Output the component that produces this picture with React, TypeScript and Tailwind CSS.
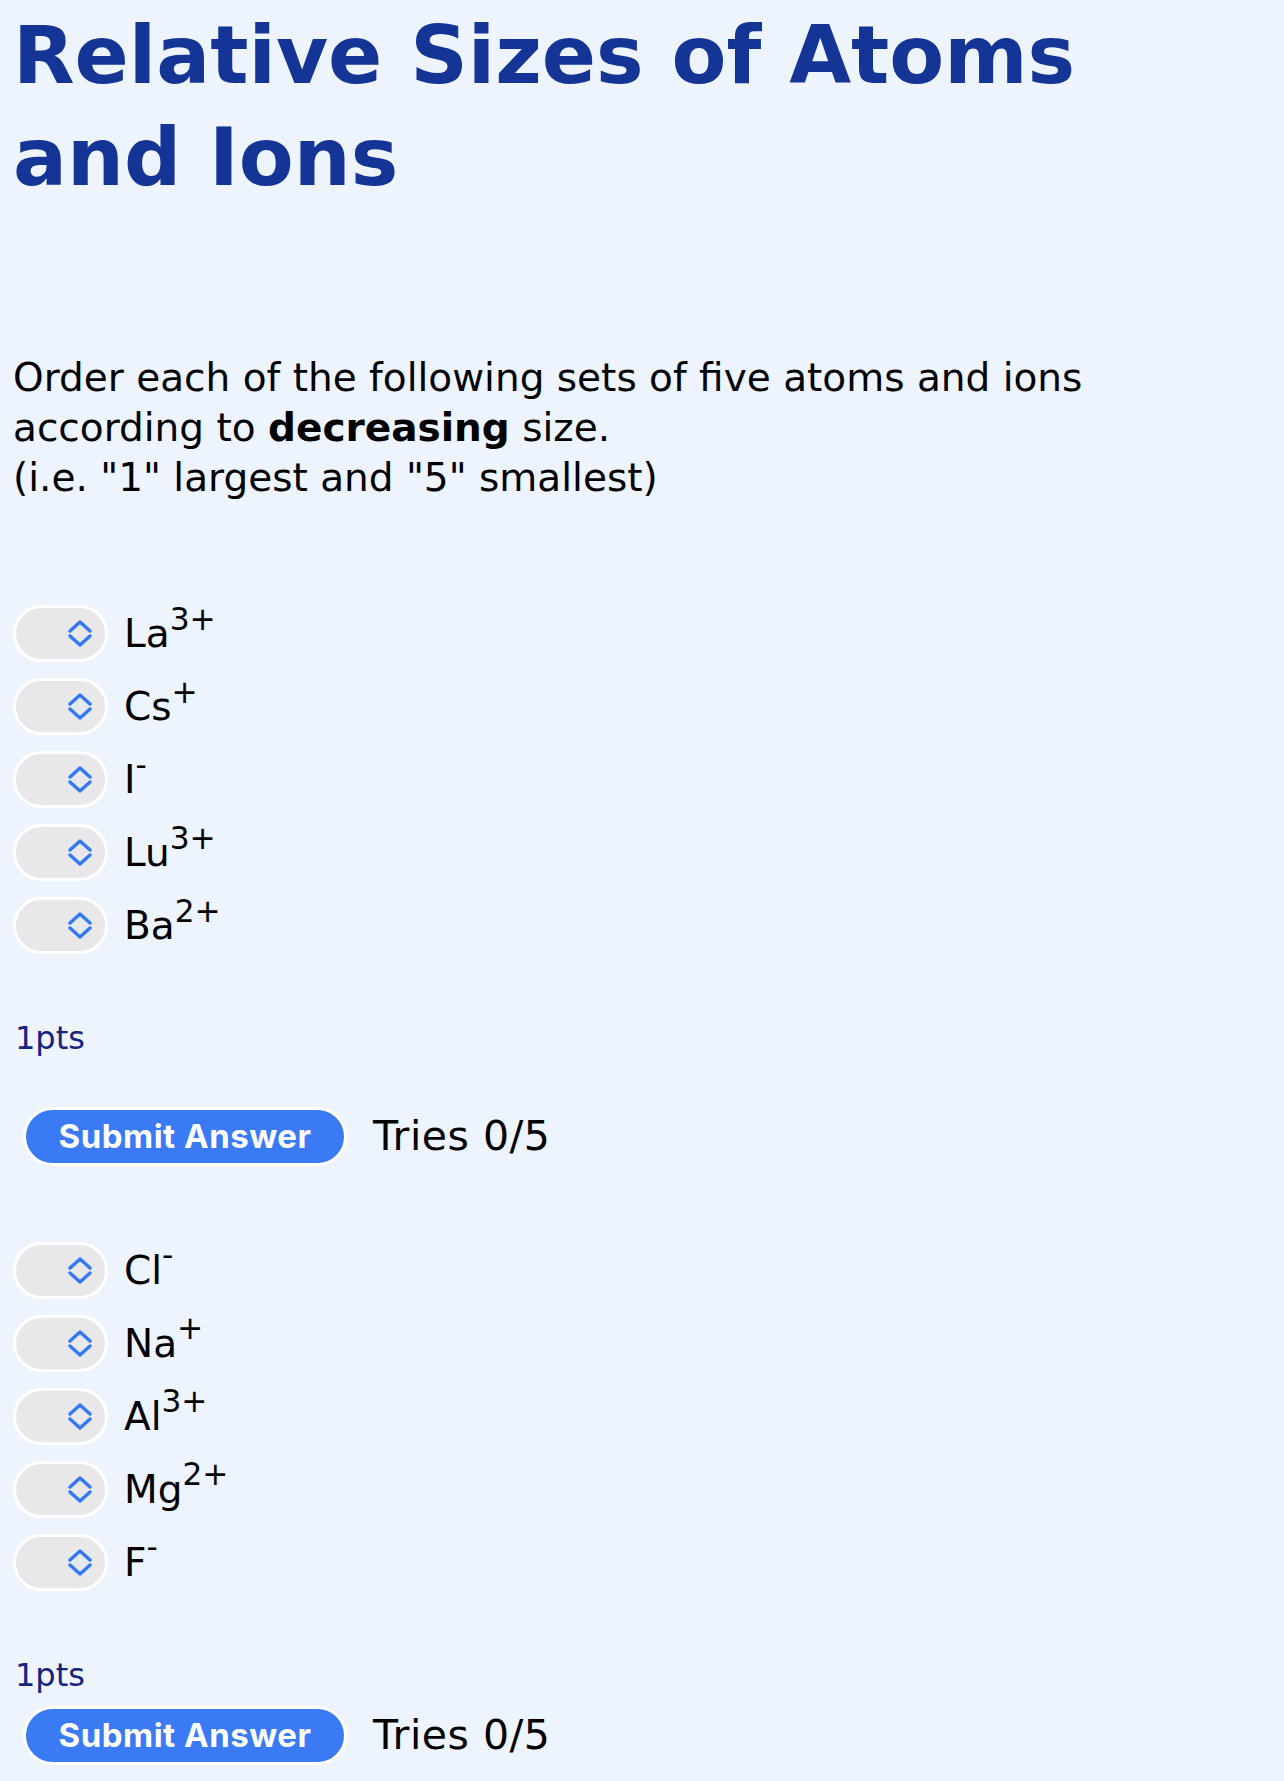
import React from "react";

type Ion = { base: string; charge: string };

const setOne: Ion[] = [
  { base: "La", charge: "3+" },
  { base: "Cs", charge: "+" },
  { base: "I", charge: "-" },
  { base: "Lu", charge: "3+" },
  { base: "Ba", charge: "2+" },
];

const setTwo: Ion[] = [
  { base: "Cl", charge: "-" },
  { base: "Na", charge: "+" },
  { base: "Al", charge: "3+" },
  { base: "Mg", charge: "2+" },
  { base: "F", charge: "-" },
];

const UpDown = () => (
  <svg className="shrink-0" width="24" height="27" viewBox="0 0 24 27" fill="none">
    <path
      d="M2 11 L12 2 L22 11 M2 16 L12 25 L22 16"
      stroke="#3478f6"
      strokeWidth="3.4"
      strokeLinecap="round"
      strokeLinejoin="round"
    />
  </svg>
);

const IonRow = ({ ion }: { ion: Ion }) => (
  <div className="flex h-[57px] items-center gap-4">
    <div className="flex h-[57px] w-[95px] items-center justify-end rounded-full border-[3px] border-white bg-[#e8e8ea] pr-[13px]">
      <UpDown />
    </div>
    <span className="text-[39px] leading-none text-black">
      {ion.base}
      <sup className="top-[-0.55em] text-[80%]">{ion.charge}</sup>
    </span>
  </div>
);

const SubmitRow = () => (
  <div className="flex items-center">
    <button className="ml-[10px] flex h-[59px] w-[324px] items-center justify-center rounded-full border-[3px] border-white bg-[#3a7bf5] font-['Inter',sans-serif] text-[33px] font-bold tracking-[0.5px] text-white">
      Submit Answer
    </button>
    <span className="ml-[26px] text-[41px] tracking-[0.5px] text-black">Tries 0/5</span>
  </div>
);

const Question = ({ ions, tight }: { ions: Ion[]; tight?: boolean }) => (
  <div>
    <div className="flex flex-col gap-4">
      {ions.map((ion) => (
        <IonRow key={ion.base} ion={ion} />
      ))}
    </div>
    <div className="mt-[65px] pl-[2px] text-[32px] leading-[38px] text-[#15247f]">
      1pts
    </div>
    <div className={tight ? "mt-[11px]" : "mt-[49px]"}>
      <SubmitRow />
    </div>
  </div>
);

export default function App() {
  return (
    <div className="min-h-screen bg-[#eef4fe] pb-6 pl-[13px] font-['DejaVu_Sans',Verdana,sans-serif]">
      <h1 className="max-w-[1150px] pt-[5px] text-[80px] font-bold leading-[102px] text-[#143496]">
        Relative Sizes of Atoms and Ions
      </h1>

      <p className="mt-[144px] max-w-[1150px] text-[39px] leading-[50px] text-black">
        Order each of the following sets of five atoms and ions according to{" "}
        <b>decreasing</b> size.
        <br />
        (i.e. "1" largest and "5" smallest)
      </p>

      <div className="mt-[102px]">
        <Question ions={setOne} />
      </div>

      <div className="mt-[74px]">
        <Question ions={setTwo} tight />
      </div>
    </div>
  );
}
